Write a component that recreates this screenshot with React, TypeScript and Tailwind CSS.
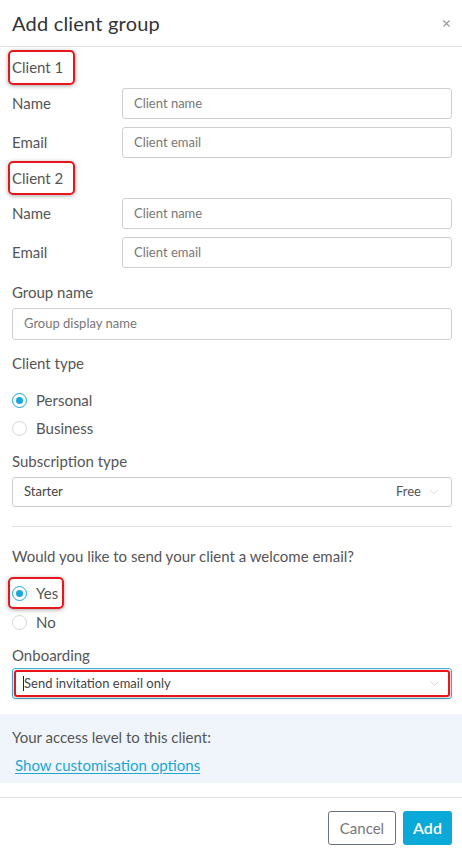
import { ChevronDown, X } from "lucide-react";

const font = { fontFamily: "Lato, 'Noto Sans', sans-serif" };

function Radio({ checked, label }: { checked?: boolean; label: string }) {
  return (
    <div className="flex items-center gap-[9px] h-[28px]">
      {checked ? (
        <span className="w-[15px] h-[15px] rounded-full border-[1.5px] border-[#18a7d8] flex items-center justify-center">
          <span className="w-[7px] h-[7px] rounded-full bg-[#18a7d8]" />
        </span>
      ) : (
        <span className="w-[15px] h-[15px] rounded-full border border-[#d6d6d6]" />
      )}
      <span className="text-[15px] text-[#555]">{label}</span>
    </div>
  );
}

function Marked({ children, className = "" }: { children: React.ReactNode; className?: string }) {
  return (
    <div
      className={
        "inline-flex items-center border-2 border-[#e8151b] rounded-[5px] shadow-[0_1px_4px_rgba(0,0,0,0.35)] " +
        className
      }
    >
      {children}
    </div>
  );
}

function Row({ label, placeholder }: { label: string; placeholder: string }) {
  return (
    <div className="flex items-center h-[31px] mb-[8px]">
      <div className="w-[110px] text-[15px] text-[#555]">{label}</div>
      <div className="flex-1 h-[31px] border border-[#cfcfcf] rounded-[3px] flex items-center px-[11px] text-[13px] text-[#777]">
        {placeholder}
      </div>
    </div>
  );
}

export default function App() {
  return (
    <div className="w-[462px] h-[853px] bg-white text-[#4a4a4a] overflow-hidden" style={font}>
      <div className="h-[47px] border-b border-[#e2e2e2] flex items-center justify-between pl-[12px] pr-[10px]">
        <h1 className="text-[20px] text-[#333] tracking-[0.2px]">Add client group</h1>
        <X size={11} strokeWidth={2.5} className="text-[#999]" />
      </div>

      <div className="pl-[12px] pr-[10px]">
        <div className="h-[41px] flex items-center -ml-[4px]">
          <Marked className="h-[35px] px-[2px] w-[67px]">
            <span className="text-[15px] text-[#555]">Client 1</span>
          </Marked>
        </div>
        <Row label="Name" placeholder="Client name" />
        <Row label="Email" placeholder="Client email" />
        <div className="h-[32px] flex items-center -ml-[4px] -mt-[4px] mb-[4px]">
          <Marked className="h-[34px] px-[2px] w-[67px]">
            <span className="text-[15px] text-[#555]">Client 2</span>
          </Marked>
        </div>
        <Row label="Name" placeholder="Client name" />
        <Row label="Email" placeholder="Client email" />

        <div className="text-[15px] text-[#555] mt-[13px] h-[20px]">Group name</div>
        <div className="mt-[7px] h-[32px] border border-[#cfcfcf] rounded-[3px] flex items-center px-[11px] text-[13px] text-[#777]">
          Group display name
        </div>

        <div className="text-[15px] text-[#555] mt-[12px] h-[20px]">Client type</div>
        <div className="mt-[14px]">
          <Radio checked label="Personal" />
          <Radio label="Business" />
        </div>

        <div className="text-[15px] text-[#555] mt-[8px] h-[20px]">Subscription type</div>
        <div className="mt-[7px] h-[30px] border border-[#cfcfcf] rounded-[3px] flex items-center justify-between pl-[11px] pr-[10px] text-[13px] text-[#444]">
          <span>Starter</span>
          <span className="flex items-center gap-[6px] text-[#555]">
            Free <ChevronDown size={14} strokeWidth={1} className="text-[#bbb]" />
          </span>
        </div>

        <div className="mt-[19px] border-t border-[#e2e2e2]" />

        <div className="text-[15px] text-[#555] mt-[18px] h-[20px]">
          Would you like to send your client a welcome email?
        </div>
        <div className="mt-[12px] -ml-[4px]">
          <Marked className="h-[32px] pl-[2px] pr-[4px]">
            <Radio checked label="Yes" />
          </Marked>
        </div>
        <div className="-mt-[1px]">
          <Radio label="No" />
        </div>

        <div className="text-[15px] text-[#555] mt-[8px] h-[20px]">Onboarding</div>
        <div className="mt-[4px] h-[31px] border border-[#48b3da] rounded-[3px] p-[1px]">
          <div className="h-full border-2 border-[#e8151b] rounded-[3px] shadow-[0_1px_4px_rgba(0,0,0,0.3)] flex items-center justify-between pl-[7px] pr-[6px] text-[13px] text-[#444]">
            <span className="flex items-center">
              <span className="w-px h-[15px] bg-[#222]" />
              <span>Send invitation email only</span>
            </span>
            <ChevronDown size={15} strokeWidth={1} className="text-[#bbb]" />
          </div>
        </div>
      </div>

      <div className="mt-[15px] h-[69px] bg-[#f0f5fc] px-[12px] pt-[12px]">
        <div className="text-[15px] text-[#555]">Your access level to this client:</div>
        <div className="mt-[5px] ml-[3px] text-[15px] text-[#1da6d6] underline underline-offset-2">
          Show customisation options
        </div>
      </div>

      <div className="mt-[14px] border-t border-[#e2e2e2] flex justify-end gap-[7px] px-[10px] pt-[13px]">
        <button className="h-[34px] w-[68px] border border-[#6b7280] rounded-[3px] text-[15px] text-[#777] bg-white">
          Cancel
        </button>
        <button className="h-[34px] w-[49px] rounded-[3px] text-[16px] text-white bg-[#0aa9d8] font-semibold">
          Add
        </button>
      </div>
    </div>
  );
}
